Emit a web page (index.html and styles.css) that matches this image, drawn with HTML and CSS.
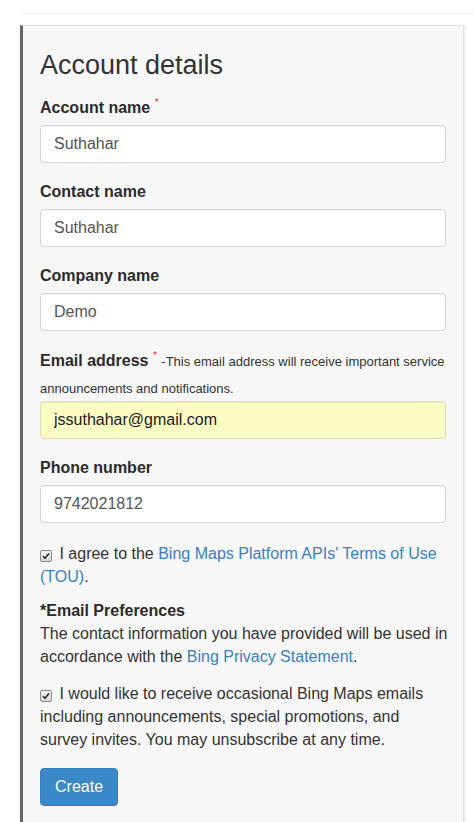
FILE: index.html
```html
<!DOCTYPE html>
<html>
<head>
<meta charset="utf-8">
<link rel="stylesheet" href="styles.css">
</head>
<body>
<div class="topline"></div>
<div class="panel">
  <h3 class="title">Account details</h3>

  <div class="group">
    <label class="label">Account name <sup class="req">*</sup></label>
    <input class="field" type="text" value="Suthahar">
  </div>

  <div class="group">
    <label class="label">Contact name</label>
    <input class="field" type="text" value="Suthahar">
  </div>

  <div class="group">
    <label class="label">Company name</label>
    <input class="field" type="text" value="Demo">
  </div>

  <div class="group">
    <label class="label label-email">Email address <sup class="req">*</sup> <span class="hint">-This email address will receive important service announcements and notifications.</span></label>
    <input class="field field-auto" type="text" value="jssuthahar@gmail.com">
  </div>

  <div class="group">
    <label class="label">Phone number</label>
    <input class="field" type="text" value="9742021812">
  </div>

  <div class="check check-first">
    <span class="box"><svg width="8" height="8" viewBox="0 0 8 8"><path d="M1 4.2 L3 6.2 L7 1.6" fill="none" stroke="#222" stroke-width="1.6"/></svg></span>
    I agree to the <a class="link" href="#">Bing Maps Platform APIs' Terms of Use (TOU)</a>.
  </div>

  <div class="prefs">
    <div class="prefs-title">*Email Preferences</div>
    <div class="prefs-text">The contact information you have provided will be used in accordance with the <a class="link" href="#">Bing Privacy Statement</a>.</div>
  </div>

  <div class="check check-second">
    <span class="box"><svg width="8" height="8" viewBox="0 0 8 8"><path d="M1 4.2 L3 6.2 L7 1.6" fill="none" stroke="#222" stroke-width="1.6"/></svg></span>
    I would like to receive occasional Bing Maps emails including announcements, special promotions, and survey invites. You may unsubscribe at any time.
  </div>

  <button class="btn" type="button">Create</button>
</div>
</body>
</html>
```

FILE: styles.css
```css
html, body {
  margin: 0;
  padding: 0;
  background: #ffffff;
}
body {
  font-family: "Liberation Sans", Arial, sans-serif;
  font-size: 16px;
  line-height: 23px;
  color: #333333;
  overflow: hidden;
}
.topline {
  height: 13px;
  margin-left: 20px;
  border-bottom: 1px solid #eeeeee;
}
.panel {
  margin-top: 11px;
  margin-left: 20px;
  width: 406px;
  padding: 24px 17px 60px 17px;
  background: #f7f7f7;
  border-top: 1px solid #dddddd;
  border-left: 3px solid #666666;
  border-right: 1px solid #dddddd;
  box-shadow: 2px 0 0 #f0f0f0;
}
.title {
  margin: 0 0 15px 0;
  font-size: 27px;
  line-height: 31px;
  font-weight: normal;
  color: #333333;
}
.group {
  margin-bottom: 17px;
}
.label {
  display: block;
  font-weight: bold;
  font-size: 16px;
  line-height: 23px;
  margin-bottom: 6px;
  color: #2b2b2b;
}
.label-email {
  line-height: 27px;
  margin-top: -1px;
  margin-bottom: 0;
}
.req {
  color: #e0343a;
  font-size: 10px;
  font-weight: normal;
  line-height: 0;
  vertical-align: 7px;
}
.hint {
  font-weight: normal;
  font-size: 13px;
  line-height: 24px;
  color: #333333;
}
.field {
  display: block;
  box-sizing: border-box;
  width: 100%;
  height: 38px;
  margin: 0;
  padding: 0 13px;
  font-family: "Liberation Sans", Arial, sans-serif;
  font-size: 16px;
  color: #555555;
  background: #ffffff;
  border: 1px solid #d4d4d4;
  border-radius: 4px;
  box-shadow: inset 0 1px 1px rgba(0,0,0,0.04);
  outline: none;
}
.field-auto {
  background: #fafcc2;
  color: #222222;
  border-color: #dcdcb8;
}
.check {
  line-height: 23px;
}
.check-first {
  margin-top: 19px;
}
.check-second {
  margin-top: 14px;
}
.box {
  display: inline-flex;
  align-items: center;
  justify-content: center;
  box-sizing: border-box;
  width: 12px;
  height: 12px;
  margin-left: 0;
  margin-right: 3px;
  vertical-align: -1px;
  border: 1px solid #8a8a8a;
  border-radius: 2px;
  background: linear-gradient(#f2f2f2, #d8d8d8);
}
.box svg {
  display: block;
}
.link {
  color: #3b80c2;
  text-decoration: none;
}
.prefs {
  margin-top: 11px;
}
.prefs-title {
  font-weight: bold;
  color: #2b2b2b;
}
.prefs-text {
  margin-right: -6px;
}
.btn {
  display: block;
  margin-top: 17px;
  height: 38px;
  padding: 0 14px;
  font-family: "Liberation Sans", Arial, sans-serif;
  font-size: 16px;
  color: #ffffff;
  background: #3b88c9;
  border: 1px solid #347cbb;
  border-radius: 4px;
}
```
